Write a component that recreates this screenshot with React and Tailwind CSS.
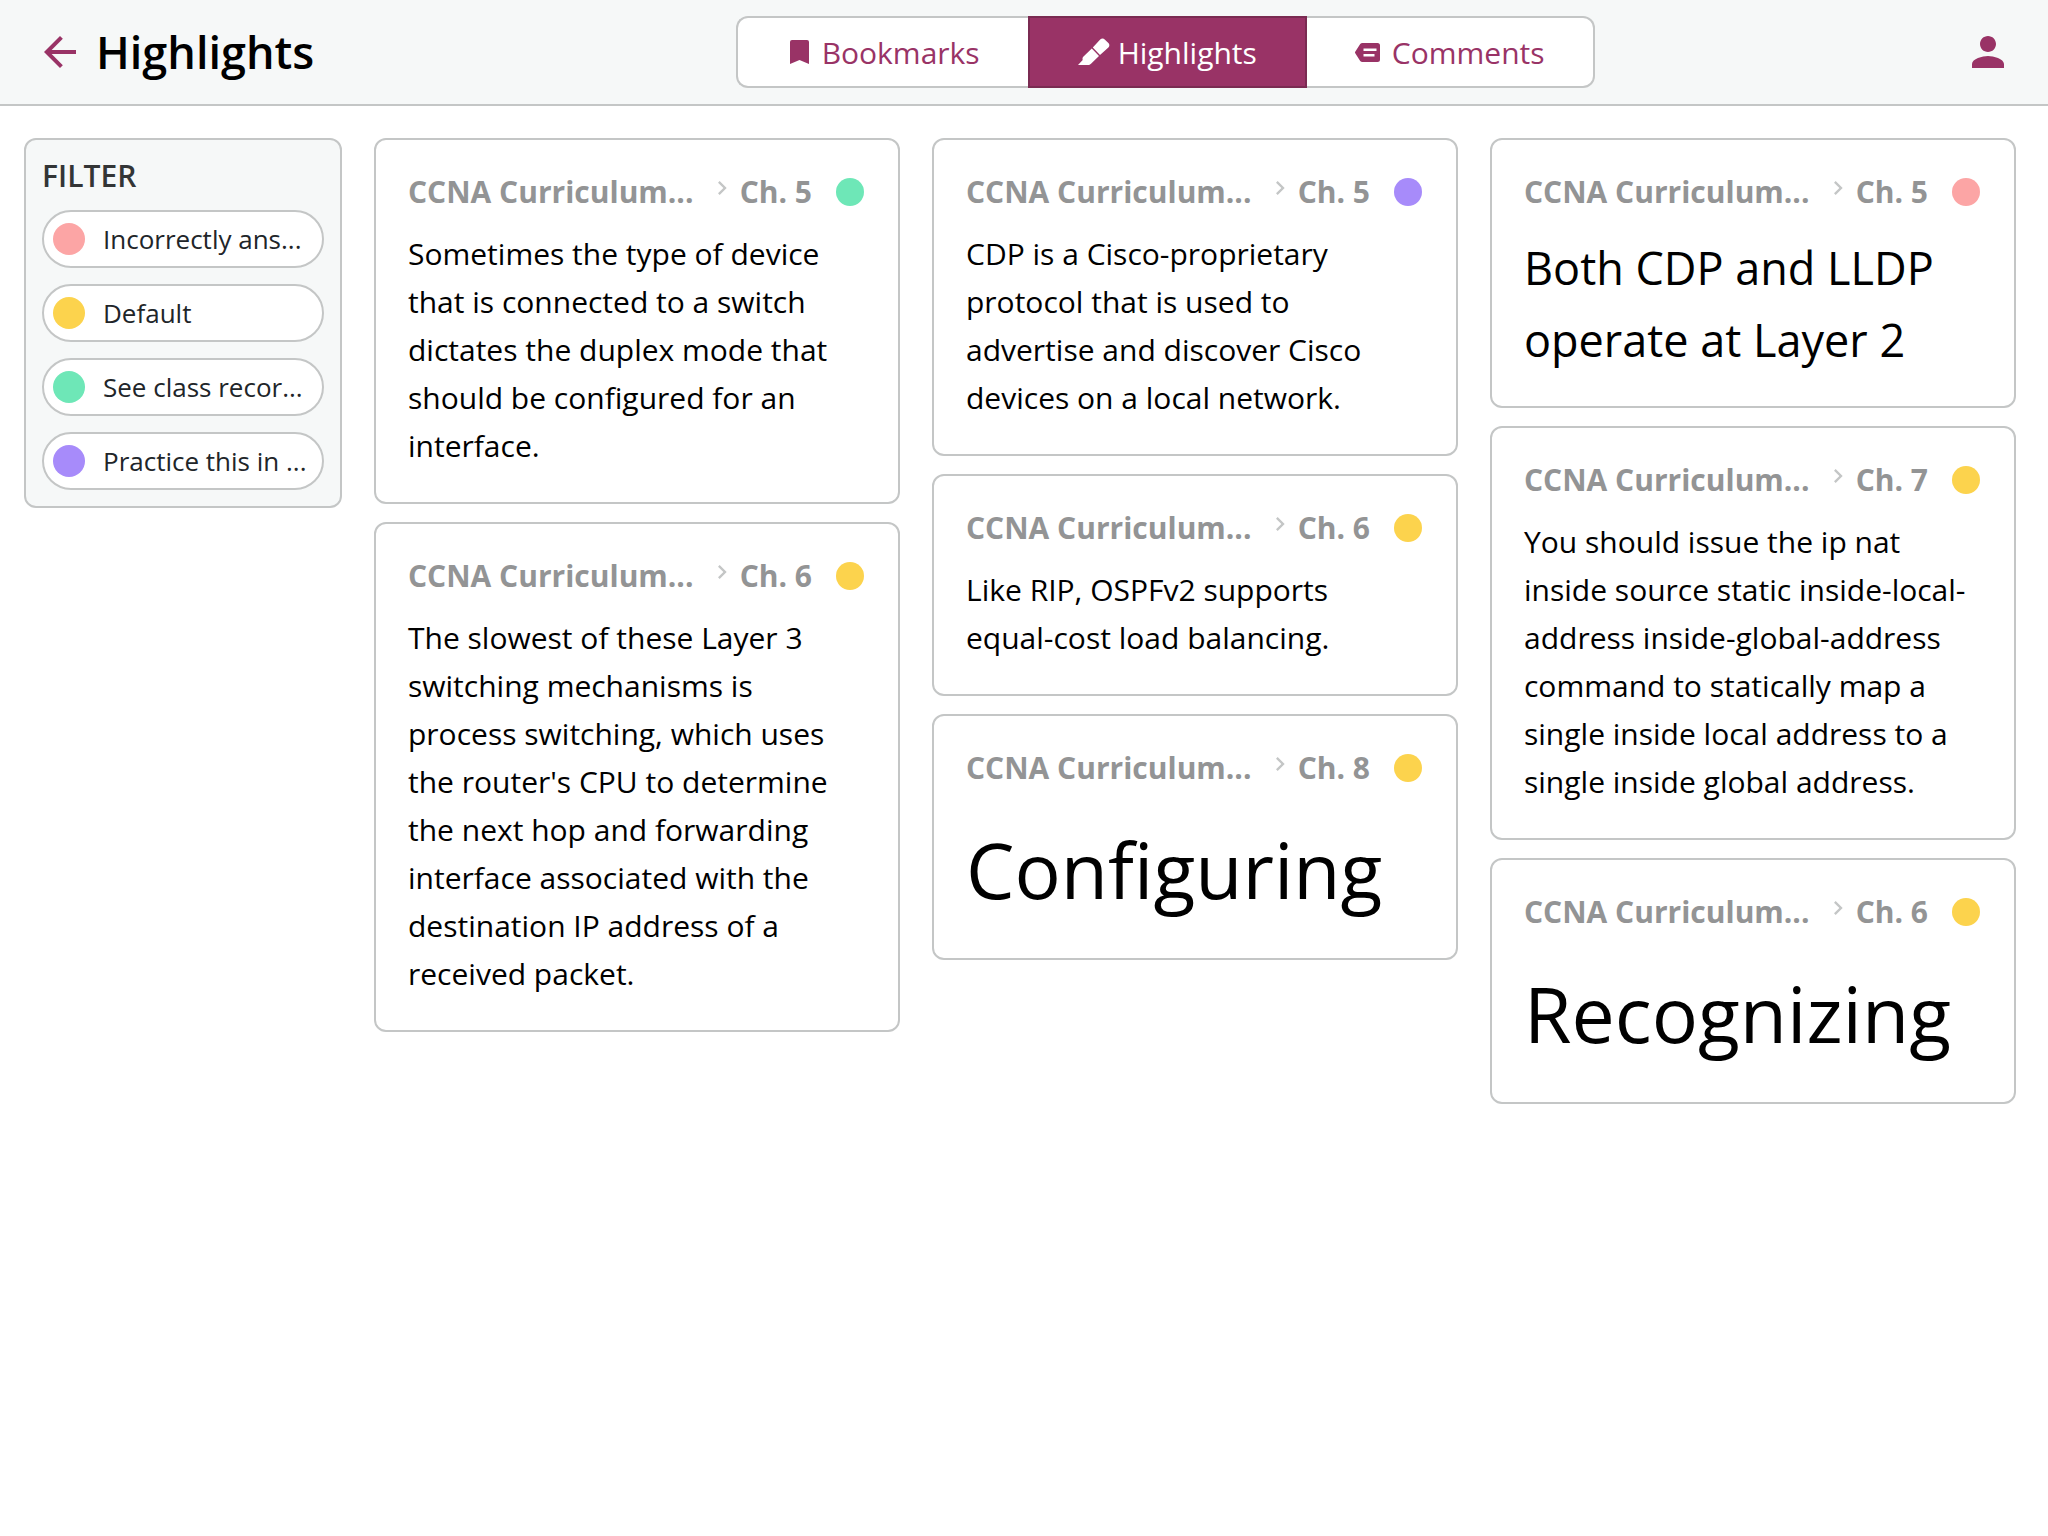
import { MdArrowBack, MdPerson, MdChevronRight } from 'react-icons/md';

const FILTERS = [
  { label: 'Incorrectly ans...', dot: 'bg-[#fca5a5]' },
  { label: 'Default', dot: 'bg-[#fcd34d]' },
  { label: 'See class recor...', dot: 'bg-[#6ee7b7]' },
  { label: 'Practice this in ...', dot: 'bg-[#a78bfa]' }
];

const SIZES = {
  body: 'text-[30px] leading-[48px]',
  heading: 'text-[45px] leading-[72px] pt-0.5 -mb-0.5',
  display: 'text-[77px] leading-[120px] pt-1 -mb-1'
};

const COLUMNS = [
  [
    {
      chapter: 'Ch. 5',
      dot: 'bg-[#6ee7b7]',
      size: 'body',
      text: 'Sometimes the type of device that is connected to a switch dictates the duplex mode that should be configured for an interface.'
    },
    {
      chapter: 'Ch. 6',
      dot: 'bg-[#fcd34d]',
      size: 'body',
      text: "The slowest of these Layer 3 switching mechanisms is process switching, which uses the router's CPU to determine the next hop and forwarding interface associated with the destination IP address of a received packet."
    }
  ],
  [
    {
      chapter: 'Ch. 5',
      dot: 'bg-[#a78bfa]',
      size: 'body',
      text: 'CDP is a Cisco-proprietary protocol that is used to advertise and discover Cisco devices on a local network.'
    },
    {
      chapter: 'Ch. 6',
      dot: 'bg-[#fcd34d]',
      size: 'body',
      text: 'Like RIP, OSPFv2 supports equal-cost load balancing.'
    },
    { chapter: 'Ch. 8', dot: 'bg-[#fcd34d]', size: 'display', text: 'Configuring' }
  ],
  [
    { chapter: 'Ch. 5', dot: 'bg-[#fca5a5]', size: 'heading', text: 'Both CDP and LLDP operate at Layer 2' },
    {
      chapter: 'Ch. 7',
      dot: 'bg-[#fcd34d]',
      size: 'body',
      text: 'You should issue the ip nat inside source static inside-local-address inside-global-address command to statically map a single inside local address to a single inside global address.'
    },
    { chapter: 'Ch. 6', dot: 'bg-[#fcd34d]', size: 'display', text: 'Recognizing' }
  ]
];

function BookmarkIcon() {
  return (
    <svg viewBox="-4 0 24 24" className="w-6 h-6 shrink-0" fill="currentColor" aria-hidden="true">
      <path d="M2 0h15a2 2 0 0 1 2 2v22l-9.500-4L0 24V2a2 2 0 0 1 2-2z" />
    </svg>
  );
}

function HighlighterIcon() {
  return (
    <svg viewBox="0 0 32 28" className="w-8 h-7 shrink-0" fill="currentColor" aria-hidden="true">
      <path d="M14.800 9.500 22.200 1.600c1.300-1.400 3.200-1.500 4.500-.2l3.700 3.700c1.300 1.300 1.300 3.200 0 4.500L22 17z" />
      <path d="M13.800 10.500 21 18l-8 7.800c-.9.900-1.800 1.200-3 1.200H0l4.700-5c-.4-1.500-.2-2.500.8-3.500z" />
    </svg>
  );
}

function CommentIcon() {
  return (
    <svg viewBox="0 0 25 19" className="w-[25px] h-[19px] shrink-0" fill="currentColor" aria-hidden="true">
      <path
        fillRule="evenodd"
        d="M7.500 0H22.500a2.500 2.500 0 0 1 2.500 2.500v14a2.500 2.500 0 0 1-2.500 2.500H7.500a3 3 0 0 1-2.300-1L.4 10.500a1.500 1.500 0 0 1 0-2L5.200 1a3 3 0 0 1 2.300-1zM8.500 5.500v2.500h13V5.500zM8.500 11v2.500h11V11z"
      />
    </svg>
  );
}

const TABS = [
  { label: 'Bookmarks', icon: BookmarkIcon, gap: 'gap-3' },
  { label: 'Highlights', icon: HighlighterIcon, gap: 'gap-2' },
  { label: 'Comments', icon: CommentIcon, gap: 'gap-3' }
];

function HighlightCard({ item }) {
  return (
    <article className="rounded-xl border-2 border-[#c4c6c6] bg-white p-8 pt-7">
      <div className="flex items-center mb-[14px] pr-[2px]">
        <h2 className="flex-1 min-w-0 truncate text-[30px] leading-[48px] font-bold text-[#939495]">CCNA Curriculum...</h2>
        <MdChevronRight className="w-7 h-7 mr-1 mb-2 shrink-0 text-[#c4c6c6]" />
        <span className="text-[30px] leading-[48px] font-bold text-[#939495]">{item.chapter}</span>
        <span className={`w-7 h-7 ml-6 shrink-0 rounded-full ${item.dot}`} />
      </div>
      <p className={`pr-2 text-black ${SIZES[item.size]}`}>{item.text}</p>
    </article>
  );
}

export default function App() {
  return (
    <div className="min-h-screen bg-white text-black font-['Open_Sans','Noto_Sans',sans-serif]">
      <header className="flex items-center justify-between px-9 py-4 bg-[#f6f8f8] border-b-2 border-[#c4c6c6]">
        <div className="flex items-center gap-3 pr-13">
          <a href="#back" aria-label="Back" className="text-[#993366]">
            <MdArrowBack className="w-12 h-12" />
          </a>
          <h1 className="text-[45px] leading-[72px] font-semibold">Highlights</h1>
        </div>

        <nav className="flex rounded-xl text-[30px]">
          {TABS.map(tab => {
            const active = tab.label === 'Highlights';
            return (
              <button
                key={tab.label}
                type="button"
                className={`flex items-center h-[72px] px-12 border-y-2 first:rounded-l-xl first:border-l-2 last:rounded-r-xl last:border-r-2 ${tab.gap} ${
                  active ? 'bg-[#993366] border-x-2 border-[#7a2b52] text-white' : 'bg-white border-[#c4c6c6] text-[#993366]'
                }`}
              >
                <tab.icon />
                <span>{tab.label}</span>
              </button>
            );
          })}
        </nav>

        <button type="button" aria-label="Account" className="text-[#993366]">
          <MdPerson className="w-12 h-12" />
        </button>
      </header>

      <main className="flex items-start gap-8 pt-8 pl-6 pr-8">
        <aside className="w-[318px] shrink-0 rounded-xl border-2 border-[#c4c6c6] bg-[#f6f8f8] p-4">
          <h2 className="text-[30px] leading-[40px] mb-[14px] font-semibold text-[#333536]">FILTER</h2>
          <div className="flex flex-col gap-4">
            {FILTERS.map(filter => (
              <button
                key={filter.label}
                type="button"
                className="flex items-center gap-[18px] h-[58px] px-[9px] rounded-full border-2 border-[#c4c6c6] bg-white text-[26px] text-[#212529]"
              >
                <span className={`w-8 h-8 shrink-0 rounded-full ${filter.dot}`} />
                <span className="whitespace-nowrap">{filter.label}</span>
              </button>
            ))}
          </div>
        </aside>

        <section className="flex-1 min-w-0 grid grid-cols-3 items-start gap-8">
          {COLUMNS.map((column, i) => (
            <div key={i} className="flex flex-col gap-[18px]">
              {column.map(item => (
                <HighlightCard key={item.chapter} item={item} />
              ))}
            </div>
          ))}
        </section>
      </main>
    </div>
  );
}
